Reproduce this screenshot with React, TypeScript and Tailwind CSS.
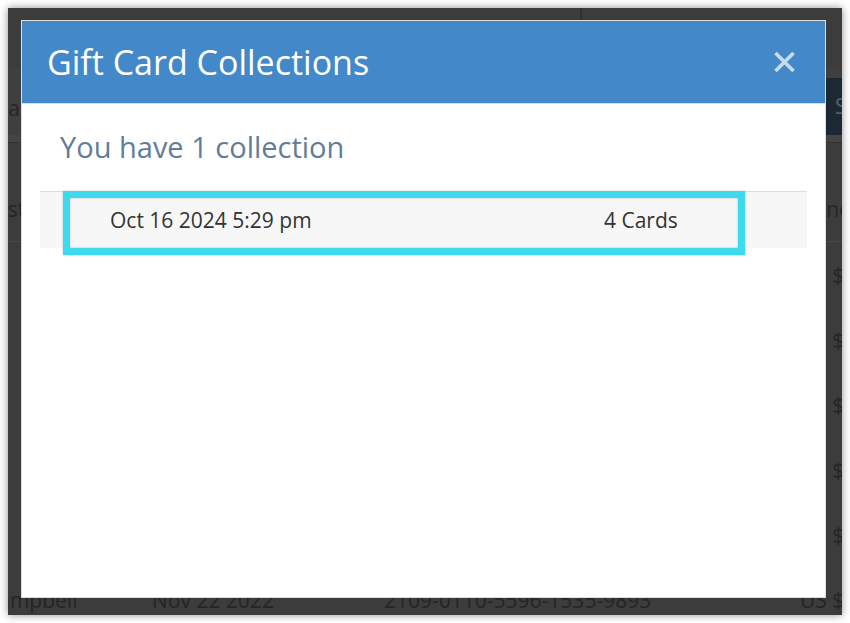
interface GiftCardRow {
  name: string
  date: string
  code: string
  amount: string
}

const giftCards: GiftCardRow[] = [
  { name: 'Li', date: 'Feb 14 2023', code: '3381-0042-7710-2284-5531', amount: 'US $25.00' },
  { name: 'Jo', date: 'Jan 09 2023', code: '5502-1187-3306-4419-0072', amount: 'US $50.00' },
  { name: 'Ly', date: 'Dec 30 2022', code: '1174-6620-9051-3388-2146', amount: 'US $20.00' },
  { name: 'Ty', date: 'Dec 12 2022', code: '8840-2215-0736-5591-4403', amount: 'US $100.00' },
  { name: 'Ji', date: 'Nov 28 2022', code: '6619-3370-4482-0157-7728', amount: 'US $25.00' },
  { name: 'Campbell', date: 'Nov 22 2022', code: '2109-0110-5596-1535-9893', amount: 'US $40.00' },
]

function CloseIcon(): JSX.Element {
  return (
    <svg width="23" height="22" viewBox="0 0 23 22" fill="none" stroke="currentColor" strokeWidth="3.6">
      <path d="M2.5 2 L20.5 20 M20.5 2 L2.5 20" />
    </svg>
  )
}

function App(): JSX.Element {
  return (
    <div className="min-h-screen bg-white p-2 font-['Open_Sans',sans-serif]">
      <div className="relative h-[607px] overflow-hidden bg-[#3c3c3c] shadow-[0_0_8px_rgba(0,0,0,0.45)]">
        {/* gift card list page, dimmed behind the dialog */}
        <div className="flex h-[60px]">
          <div className="w-[574px] shrink-0 border-r-2 border-[#323232]" />
        </div>
        <div className="flex h-[67px] items-start bg-[#3f3f3f]">
          <div className="w-[818px] shrink-0 pt-[26px]">
            <span className="-ml-[30px] inline-block text-[21px] leading-[28px] text-[#262626]">Clear</span>
          </div>
          <div className="mt-[10px] flex h-[57px] w-[120px] shrink-0 items-center bg-[#1c2935] pl-[9px] text-[21px] text-[#56626c]">
            Search
          </div>
        </div>
        <div className="h-[8px] border-b border-[#343434] bg-[#444444]" />

        <div className="grid h-[99px] grid-cols-[144px_232px_416px_1fr] items-end border-b border-[#474747] pb-[18px] text-[21px] leading-[28px] text-[#252525]">
          <span className="-ml-[23px]">Last</span>
          <span>Date</span>
          <span>Card Number</span>
          <span className="-ml-[16px]">Balance</span>
        </div>
        {giftCards.map((card) => (
          <div
            key={card.code}
            className="grid h-[65px] grid-cols-[144px_232px_416px_1fr] items-center whitespace-nowrap text-[21px] leading-[28px] text-[#252525]"
          >
            <span className="-ml-[23px]">{card.name}</span>
            <span>{card.date}</span>
            <span>{card.code}</span>
            <span>{card.amount}</span>
          </div>
        ))}

        {/* collections dialog */}
        <div className="absolute left-[13px] top-[12px] h-[578px] w-[805px] border border-[#dddddd] bg-white">
          <div className="flex h-[83px] items-center justify-between border-b border-[#dcdcdc] bg-[#4389c9] pl-[25px] pr-[29px]">
            <h2 className="text-[34px] leading-none text-white">Gift Card Collections</h2>
            <button type="button" className="text-[#c9dcef]">
              <CloseIcon />
            </button>
          </div>

          <div className="px-[18px] pt-[24px]">
            <h3 className="ml-[20px] text-[29px] leading-[38px] text-[#627c99]">You have 1 collection</h3>
            <div className="mt-[25px] flex h-[57px] items-center border-t border-[#dddddd] bg-[#f7f7f7] pt-[2px] text-[21px] text-[#333333]">
              <span className="w-[564px] shrink-0 pl-[70px]">Oct 16 2024 5:29 pm</span>
              <span>4 Cards</span>
            </div>
          </div>

          <div className="absolute left-[41px] top-[170px] h-[64px] w-[682px] border-[7px] border-[#3dd9ee] shadow-[inset_0_0_2px_rgba(0,0,0,0.3),0_0_2px_rgba(0,0,0,0.2)]" />
        </div>
      </div>
    </div>
  )
}

export default App
